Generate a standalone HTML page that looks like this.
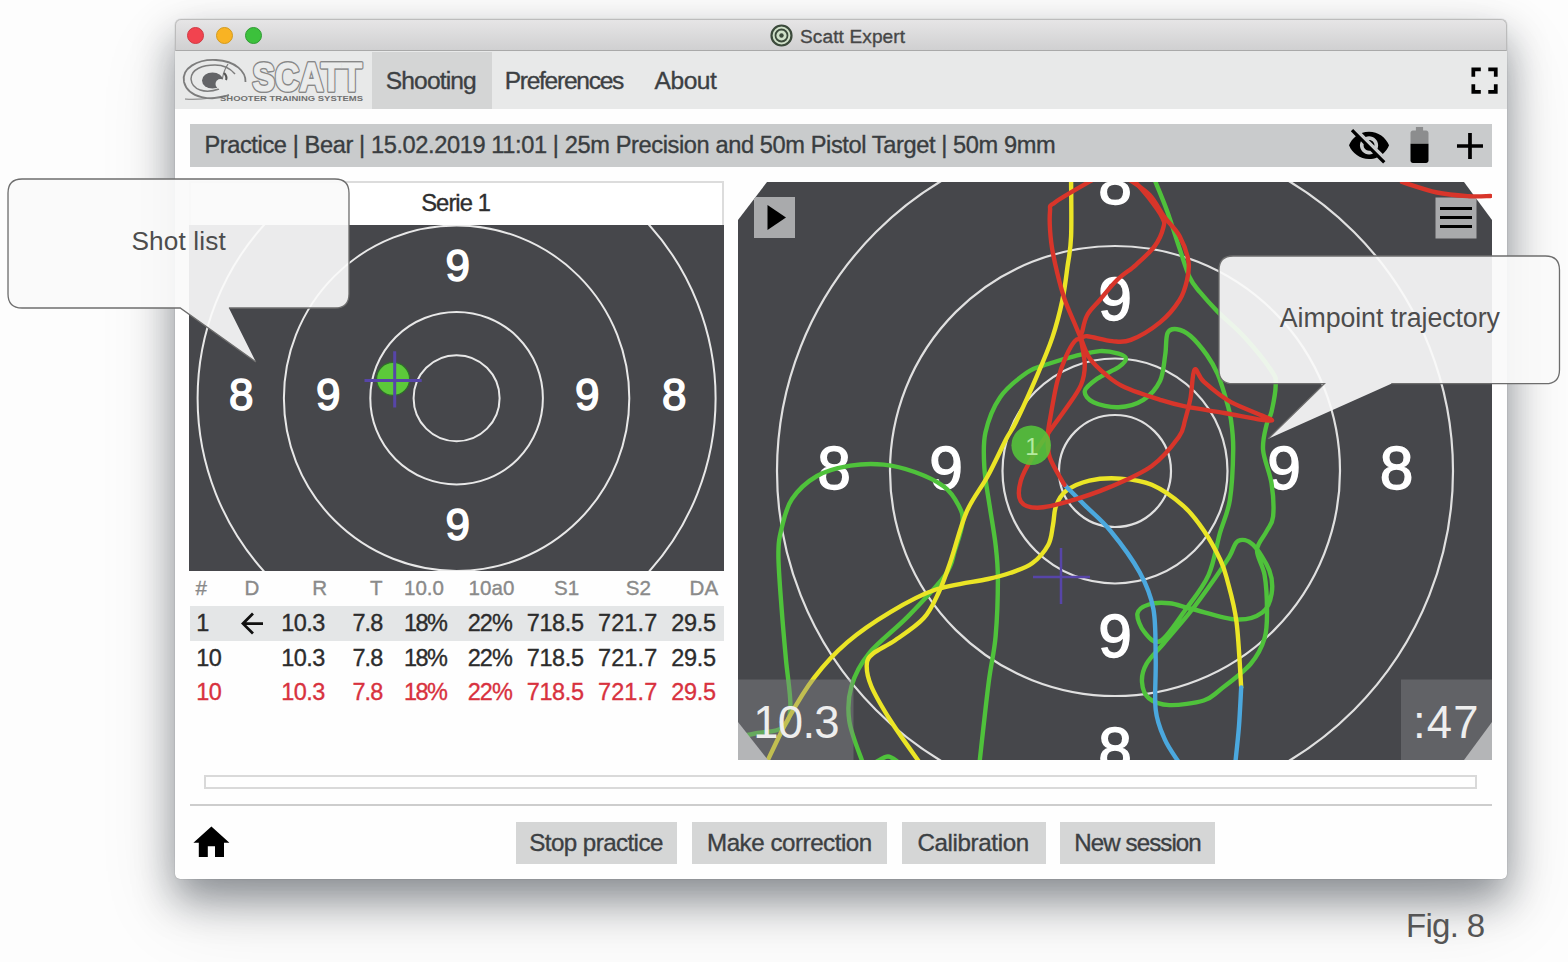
<!DOCTYPE html>
<html><head><meta charset="utf-8">
<style>
*{margin:0;padding:0;box-sizing:border-box}
html,body{width:1568px;height:962px;overflow:hidden;background:#fdfdfd;font-family:"Liberation Sans",sans-serif}
div,svg{position:absolute}
.t{white-space:nowrap;line-height:1;-webkit-text-stroke:0.35px currentColor}
.r{-webkit-text-stroke:0}
</style></head><body>
<div style="left:175px;top:18.5px;width:1332px;height:860.5px;background:#fefefe;border-radius:6px 6px 5px 5px;box-shadow:0 20px 40px rgba(10,20,30,0.42),0 30px 80px rgba(0,0,0,0.12),0 0 1px rgba(0,0,0,0.45)"></div>
<div style="left:175px;top:18.5px;width:1332px;height:32.5px;border-radius:6px 6px 0 0;background:linear-gradient(#e6e5e6,#d0d0d1);border:1px solid #bcbcbc;border-bottom:1px solid #a9a9a9"></div>
<div style="left:186.8px;top:26.8px;width:17.4px;height:17.4px;border-radius:50%;background:#f2434f;border:1px solid #cf3a44"></div>
<div style="left:215.8px;top:26.8px;width:17.4px;height:17.4px;border-radius:50%;background:#f9b323;border:1px solid #d29a1e"></div>
<div style="left:244.5px;top:26.8px;width:17.4px;height:17.4px;border-radius:50%;background:#3cc13c;border:1px solid #2f9a33"></div>
<svg style="left:770px;top:24px" width="23" height="23" viewBox="0 0 23 23"><circle cx="11.5" cy="11.5" r="10" fill="#cfe0c8" stroke="#3b4a3b" stroke-width="2.2"/><circle cx="11.5" cy="11.5" r="6" fill="none" stroke="#3b4a3b" stroke-width="1.8"/><circle cx="11.5" cy="11.5" r="2.2" fill="#3b4a3b"/></svg>
<div class="t" style="left:800px;top:26.8px;font-size:19.09px;letter-spacing:0.108px;color:#474747;">Scatt Expert</div>
<div style="left:175px;top:51px;width:1332px;height:58px;background:#e8e9e9"></div>
<div style="left:371.5px;top:52px;width:120px;height:57px;background:#d4d5d5"></div>
<div class="t" style="left:385.8px;top:68.7px;font-size:24.58px;letter-spacing:-0.872px;color:#3c4043;">Shooting</div>
<div class="t" style="left:504.7px;top:68.7px;font-size:24.58px;letter-spacing:-1.285px;color:#3c4043;">Preferences</div>
<div class="t" style="left:654.6px;top:68.7px;font-size:24.58px;letter-spacing:-0.491px;color:#3c4043;">About</div>
<svg style="left:180px;top:55px" width="190" height="50" viewBox="180 55 190 50"><g fill="none" stroke="#7d7d7d" stroke-width="1.8"><path d="M229 95C212 102 188 98 184 82C181 68 198 59 216 60C236 61 246 72 245.5 82"/><path d="M219 89C205 94 192 90 191 79C191 69 203 65 215 65C224 65 230 68 235 74" stroke-width="1.5"/><path d="M228 64C224 70 222 76 222 84" stroke-width="1.3"/><path d="M185 99C200 100 215 98 229 95" stroke-width="1.2"/></g><ellipse cx="212.5" cy="80.5" rx="10.5" ry="8" fill="#636467"/><circle cx="220.5" cy="84" r="5" fill="#e8e9e9"/><path d="M224 73C226 75 227 78 226 80" stroke="#555" stroke-width="2.2" fill="none"/><g font-family="Liberation Sans" font-weight="bold" font-size="41"><text x="252.5" y="90.5" textLength="109.5" lengthAdjust="spacingAndGlyphs" fill="#888" stroke="#888" stroke-width="4.2" stroke-linejoin="round">SCATT</text><text x="252.5" y="90.5" textLength="109.5" lengthAdjust="spacingAndGlyphs" fill="#ebecec" stroke="#ebecec" stroke-width="1.2">SCATT</text></g><text x="220" y="101" font-family="Liberation Sans" font-weight="bold" font-size="7.6" textLength="143" lengthAdjust="spacingAndGlyphs" fill="#707070">SHOOTER TRAINING SYSTEMS</text></svg>
<svg style="left:0;top:0" width="1568" height="962" viewBox="0 0 1568 962" pointer-events="none"><path transform="translate(1462.1 58.15) scale(1.87)" d="M7 14H5v5h5v-2H7v-3zm-2-4h2V7h3V5H5v5zm12 7h-3v2h5v-5h-2v3zM14 5v2h3v3h2V5h-5z" fill="#000"/></svg>
<div style="left:190px;top:124px;width:1302px;height:43px;background:#c9cbcc"></div>
<div class="t" style="left:204.4px;top:133.8px;font-size:23.61px;letter-spacing:-0.394px;color:#393d40;">Practice | Bear | 15.02.2019 11:01 | 25m Precision and 50m Pistol Target | 50m 9mm</div>
<svg style="left:0;top:0" width="1568" height="962" viewBox="0 0 1568 962"><path transform="translate(1347.2 123.5) scale(1.82)" d="M12 7c2.76 0 5 2.24 5 5 0 .65-.13 1.26-.36 1.83l2.92 2.92c1.510-1.26 2.7-2.89 3.43-4.75-1.73-4.39-6-7.5-11-7.5-1.4 0-2.74.25-3.98.7l2.16 2.16C10.74 7.130 11.35 7 12 7zM2 4.27l2.28 2.28.46.46C3.08 8.3 1.780 10.02 1 12c1.73 4.39 6 7.5 11 7.5 1.55 0 3.03-.3 4.38-.84l.42.42L19.73 22 21 20.73 3.27 3 2 4.27zM7.53 9.8l1.550 1.55c-.05.21-.08.43-.08.65 0 1.66 1.34 3 3 3 .22 0 .44-.03.65-.08l1.55 1.55c-.67.33-1.41.53-2.2.53-2.76 0-5-2.24-5-5 0-.79.2-1.53.53-2.2zm4.31-.78l3.15 3.15.02-.16c0-1.66-1.34-3-3-3l-.17.01z" fill="#000"/><g transform="translate(1397.9 123.4) scale(1.8)"><path d="M15.67 4H14V2h-4v2H8.33C7.6 4 7 4.6 7 5.33V11.3h10V5.33C17 4.6 16.4 4 15.67 4z" fill="#000" fill-opacity="0.3"/><path d="M7 11.3v9.37C7 21.4 7.6 22 8.33 22h7.33c.74 0 1.34-.6 1.34-1.33V11.3H7z" fill="#000"/></g><path transform="translate(1447.7 123.7) scale(1.857)" d="M19 13h-6v6h-2v-6H5v-2h6V5h2v6h6v2z" fill="#000"/></svg>
<div style="left:189px;top:181px;width:535px;height:44px;background:#fff;border:2px solid #dcdcdc;border-bottom:none"></div>
<div class="t" style="left:421.2px;top:191.3px;font-size:23.75px;letter-spacing:-0.924px;color:#2e2e2e;">Serie 1</div>
<svg style="left:189px;top:225px" width="535" height="346" viewBox="189 225 535 346"><rect x="189" y="225" width="535" height="346" fill="#46474b"/><circle cx="456.6" cy="398.2" r="43" fill="none" stroke="#e8e8e8" stroke-width="2"/><circle cx="456.6" cy="398.2" r="86.3" fill="none" stroke="#e8e8e8" stroke-width="2"/><circle cx="456.6" cy="398.2" r="172.7" fill="none" stroke="#e8e8e8" stroke-width="2"/><circle cx="456.6" cy="398.2" r="259" fill="none" stroke="#e8e8e8" stroke-width="2"/><text x="241.29999999999998" y="409.5" font-size="44" text-anchor="middle" fill="#fff" stroke="#fff" stroke-width="1.5" font-family="Liberation Sans">8</text><text x="328.2" y="409.8" font-size="44" text-anchor="middle" fill="#fff" stroke="#fff" stroke-width="1.5" font-family="Liberation Sans">9</text><text x="587.3000000000001" y="409.8" font-size="44" text-anchor="middle" fill="#fff" stroke="#fff" stroke-width="1.5" font-family="Liberation Sans">9</text><text x="674.2" y="409.5" font-size="44" text-anchor="middle" fill="#fff" stroke="#fff" stroke-width="1.5" font-family="Liberation Sans">8</text><text x="457.8" y="280.9" font-size="44" text-anchor="middle" fill="#fff" stroke="#fff" stroke-width="1.5" font-family="Liberation Sans">9</text><text x="457.8" y="539.8" font-size="44" text-anchor="middle" fill="#fff" stroke="#fff" stroke-width="1.5" font-family="Liberation Sans">9</text><circle cx="393.1" cy="378.9" r="16.5" fill="#5cc93a" stroke="#2f6f2a" stroke-width="1.2"/><path d="M394.7 351.3V407.4M364.5 380.6H421.7" stroke="#5745a8" stroke-width="3"/></svg>
<div style="left:189.5px;top:606px;width:534px;height:34.5px;background:#e4e6e7"></div>
<div class="t" style="left:195.4px;top:578.4px;font-size:20.57px;letter-spacing:0px;color:#8a8a8a;">#</div>
<div class="t" style="left:244.5px;top:578.4px;font-size:20.57px;letter-spacing:0px;color:#8a8a8a;">D</div>
<div class="t" style="left:312.2px;top:578.4px;font-size:20.57px;letter-spacing:0px;color:#8a8a8a;">R</div>
<div class="t" style="left:370px;top:578.4px;font-size:20.57px;letter-spacing:0px;color:#8a8a8a;">T</div>
<div class="t" style="left:404px;top:578.4px;font-size:20.57px;letter-spacing:0px;color:#8a8a8a;">10.0</div>
<div class="t" style="left:468.6px;top:578.4px;font-size:20.57px;letter-spacing:0px;color:#8a8a8a;">10a0</div>
<div class="t" style="left:554px;top:578.4px;font-size:20.57px;letter-spacing:0px;color:#8a8a8a;">S1</div>
<div class="t" style="left:625.7px;top:578.4px;font-size:20.57px;letter-spacing:0px;color:#8a8a8a;">S2</div>
<div class="t" style="left:689.6px;top:578.4px;font-size:20.57px;letter-spacing:0px;color:#8a8a8a;">DA</div>
<div class="t" style="left:196.3px;top:611.8px;font-size:23.47px;letter-spacing:-0.5px;color:#2c2c2c;">1</div>
<div class="t" style="left:281.3px;top:611.8px;font-size:23.47px;letter-spacing:-0.542px;color:#2c2c2c;">10.3</div>
<div class="t" style="left:352.4px;top:611.8px;font-size:23.47px;letter-spacing:-0.886px;color:#2c2c2c;">7.8</div>
<div class="t" style="left:404px;top:611.8px;font-size:23.47px;letter-spacing:-1.552px;color:#2c2c2c;">18%</div>
<div class="t" style="left:467.8px;top:611.8px;font-size:23.47px;letter-spacing:-1.002px;color:#2c2c2c;">22%</div>
<div class="t" style="left:526.7px;top:611.8px;font-size:23.47px;letter-spacing:-0.344px;color:#2c2c2c;">718.5</div>
<div class="t" style="left:598px;top:611.8px;font-size:23.47px;letter-spacing:0.131px;color:#2c2c2c;">721.7</div>
<div class="t" style="left:671.3px;top:611.8px;font-size:23.47px;letter-spacing:-0.308px;color:#2c2c2c;">29.5</div>
<div class="t" style="left:196.3px;top:646.5999999999999px;font-size:23.47px;letter-spacing:-0.5px;color:#2c2c2c;">10</div>
<div class="t" style="left:281.3px;top:646.5999999999999px;font-size:23.47px;letter-spacing:-0.542px;color:#2c2c2c;">10.3</div>
<div class="t" style="left:352.4px;top:646.5999999999999px;font-size:23.47px;letter-spacing:-0.886px;color:#2c2c2c;">7.8</div>
<div class="t" style="left:404px;top:646.5999999999999px;font-size:23.47px;letter-spacing:-1.552px;color:#2c2c2c;">18%</div>
<div class="t" style="left:467.8px;top:646.5999999999999px;font-size:23.47px;letter-spacing:-1.002px;color:#2c2c2c;">22%</div>
<div class="t" style="left:526.7px;top:646.5999999999999px;font-size:23.47px;letter-spacing:-0.344px;color:#2c2c2c;">718.5</div>
<div class="t" style="left:598px;top:646.5999999999999px;font-size:23.47px;letter-spacing:0.131px;color:#2c2c2c;">721.7</div>
<div class="t" style="left:671.3px;top:646.5999999999999px;font-size:23.47px;letter-spacing:-0.308px;color:#2c2c2c;">29.5</div>
<div class="t" style="left:196.3px;top:681.0999999999999px;font-size:23.47px;letter-spacing:-0.5px;color:#d8323e;">10</div>
<div class="t" style="left:281.3px;top:681.0999999999999px;font-size:23.47px;letter-spacing:-0.542px;color:#d8323e;">10.3</div>
<div class="t" style="left:352.4px;top:681.0999999999999px;font-size:23.47px;letter-spacing:-0.886px;color:#d8323e;">7.8</div>
<div class="t" style="left:404px;top:681.0999999999999px;font-size:23.47px;letter-spacing:-1.552px;color:#d8323e;">18%</div>
<div class="t" style="left:467.8px;top:681.0999999999999px;font-size:23.47px;letter-spacing:-1.002px;color:#d8323e;">22%</div>
<div class="t" style="left:526.7px;top:681.0999999999999px;font-size:23.47px;letter-spacing:-0.344px;color:#d8323e;">718.5</div>
<div class="t" style="left:598px;top:681.0999999999999px;font-size:23.47px;letter-spacing:0.131px;color:#d8323e;">721.7</div>
<div class="t" style="left:671.3px;top:681.0999999999999px;font-size:23.47px;letter-spacing:-0.308px;color:#d8323e;">29.5</div>
<svg style="left:0;top:0" width="1568" height="962" viewBox="0 0 1568 962"><path transform="translate(235.5 607) scale(1.375)" d="M20 11H7.83l5.59-5.59L12 4l-8 8 8 8 1.41-1.41L7.83 13H20v-2z" fill="#111"/></svg>
<svg style="left:738px;top:182px" width="754" height="578" viewBox="738 182 754 578"><defs><clipPath id="rc"><polygon points="767,182 1464,182 1492,220 1492,760 738,760 738,220"/></clipPath></defs><g clip-path="url(#rc)"><rect x="738" y="182" width="754" height="578" fill="#46474b"/><circle cx="1115" cy="471" r="56" fill="none" stroke="#e0e0e0" stroke-width="2.2"/><circle cx="1115" cy="471" r="112.5" fill="none" stroke="#e0e0e0" stroke-width="2.2"/><circle cx="1115" cy="471" r="225" fill="none" stroke="#e0e0e0" stroke-width="2.2"/><circle cx="1115" cy="471" r="338" fill="none" stroke="#e0e0e0" stroke-width="2.2"/><text x="834.0" y="488.5" font-size="60.5" text-anchor="middle" fill="#fff" stroke="#fff" stroke-width="1.33" font-family="Liberation Sans">8</text><text x="946.2" y="488.5" font-size="60.5" text-anchor="middle" fill="#fff" stroke="#fff" stroke-width="1.33" font-family="Liberation Sans">9</text><text x="1284.0" y="488.5" font-size="60.5" text-anchor="middle" fill="#fff" stroke="#fff" stroke-width="1.33" font-family="Liberation Sans">9</text><text x="1396.5" y="488.5" font-size="60.5" text-anchor="middle" fill="#fff" stroke="#fff" stroke-width="1.33" font-family="Liberation Sans">8</text><text x="1115.1" y="204.0" font-size="60.5" text-anchor="middle" fill="#fff" stroke="#fff" stroke-width="1.33" font-family="Liberation Sans">8</text><text x="1115.1" y="319.7" font-size="60.5" text-anchor="middle" fill="#fff" stroke="#fff" stroke-width="1.33" font-family="Liberation Sans">9</text><text x="1115.1" y="657.3" font-size="60.5" text-anchor="middle" fill="#fff" stroke="#fff" stroke-width="1.33" font-family="Liberation Sans">9</text><text x="1115.1" y="770.0" font-size="60.5" text-anchor="middle" fill="#fff" stroke="#fff" stroke-width="1.33" font-family="Liberation Sans">8</text><g><path d="M736.0 737.0C739.6 736.3 750.1 734.5 757.7 733.0C765.3 731.5 776.2 732.2 781.7 728.0C787.2 723.8 789.7 719.3 790.4 708.0C791.1 696.7 787.5 676.4 786.0 660.0C784.5 643.6 783.0 627.1 781.7 609.6C780.4 592.1 778.4 568.6 778.4 555.0C778.4 541.4 779.4 537.3 781.7 528.0C784.0 518.7 786.1 507.7 792.0 499.0C797.9 490.3 807.3 481.6 817.0 476.0C826.7 470.4 839.2 467.6 850.3 465.7C861.4 463.8 872.9 463.6 883.6 464.6C894.4 465.7 904.8 468.4 914.8 472.0C924.8 475.6 936.6 481.0 943.9 486.5C951.2 492.0 955.4 499.3 958.5 505.2C961.6 511.1 963.2 514.5 962.6 522.0C962.0 529.5 957.9 541.2 955.0 550.0C952.1 558.8 953.2 563.7 945.4 574.7C937.6 585.7 921.0 603.0 908.3 616.1C895.6 629.2 878.5 641.6 869.0 653.3C859.5 664.9 854.8 674.7 851.5 686.0C848.2 697.3 847.5 708.3 849.3 721.0C851.1 733.7 860.3 755.2 862.5 762.0" fill="none" stroke="#4fc23b" stroke-width="4.4" stroke-linejoin="round" stroke-linecap="round"/><path d="M876.0 762.0C878.0 761.1 884.3 756.5 888.0 756.5C891.7 756.5 896.3 761.1 898.0 762.0" fill="none" stroke="#4fc23b" stroke-width="4.4" stroke-linejoin="round" stroke-linecap="round"/><path d="M979.6 762.0C981.1 748.7 986.0 703.1 988.7 682.2C991.4 661.3 994.1 653.6 995.6 636.5C997.1 619.4 997.9 594.5 997.9 579.3C997.9 564.0 997.0 557.3 995.6 545.0C994.2 532.7 991.5 518.4 989.6 505.6C987.7 492.8 985.1 480.3 984.4 468.2C983.7 456.1 982.8 444.6 985.4 432.8C988.0 421.0 993.1 407.4 1000.0 397.4C1006.9 387.3 1019.0 378.1 1027.0 372.5C1035.0 366.9 1040.0 366.7 1048.0 364.0C1056.0 361.3 1066.2 358.2 1074.8 356.1C1083.4 354.0 1092.5 351.5 1099.8 351.1C1107.1 350.7 1114.1 352.4 1118.5 353.6C1122.9 354.9 1126.0 356.3 1126.0 358.6C1126.0 360.9 1123.3 364.0 1118.5 367.3C1113.7 370.6 1102.9 374.7 1097.3 378.6C1091.7 382.6 1085.4 387.1 1084.8 391.0C1084.2 394.9 1087.9 399.5 1093.5 402.2C1099.1 404.9 1110.2 407.6 1118.5 407.2C1126.8 406.8 1136.5 404.2 1143.4 399.8C1150.3 395.4 1156.4 388.5 1160.0 381.0C1163.6 373.5 1163.9 363.0 1165.2 355.0C1166.5 347.0 1165.6 337.3 1167.6 333.0C1169.6 328.7 1173.2 328.7 1177.0 329.2C1180.8 329.7 1185.5 331.7 1190.5 336.0C1195.5 340.3 1202.3 348.6 1206.8 354.9C1211.3 361.2 1214.4 366.6 1217.6 373.8C1220.8 381.0 1223.5 390.4 1225.7 398.1C1227.9 405.8 1229.8 411.4 1231.0 420.0C1232.2 428.6 1233.4 436.7 1233.2 450.0C1233.0 463.3 1232.1 485.9 1229.9 499.8C1227.7 513.6 1223.5 520.6 1219.9 533.1C1216.3 545.6 1214.3 562.2 1208.5 575.1C1202.7 588.0 1193.1 599.2 1185.1 610.2C1177.1 621.2 1167.1 637.4 1160.3 641.0C1153.5 644.6 1148.1 636.5 1144.3 631.9C1140.5 627.3 1136.7 618.2 1137.4 613.6C1138.2 609.0 1143.5 606.2 1148.8 604.5C1154.1 602.8 1162.2 602.5 1169.4 603.3C1176.7 604.0 1181.1 606.3 1192.3 609.0C1203.5 611.7 1224.8 618.9 1236.5 619.5C1248.2 620.1 1256.5 616.8 1262.3 612.5C1268.1 608.2 1270.4 600.8 1271.6 593.8C1272.8 586.8 1272.4 578.6 1269.3 570.4C1266.2 562.2 1258.1 549.6 1252.9 544.7C1247.7 539.8 1241.9 539.0 1238.0 541.0C1234.1 543.0 1233.2 550.3 1229.5 556.4C1225.8 562.5 1222.1 568.0 1215.5 577.4C1208.9 586.8 1198.4 601.6 1189.8 612.5C1181.2 623.4 1171.2 634.4 1164.0 643.0C1156.8 651.6 1150.2 657.4 1146.5 663.9C1142.8 670.4 1141.6 676.5 1142.0 682.2C1142.4 687.9 1144.2 694.4 1148.8 698.2C1153.4 702.0 1160.2 704.7 1169.4 705.1C1178.6 705.5 1195.2 703.1 1203.7 700.5C1212.2 697.9 1212.4 695.8 1220.2 689.7C1228.0 683.6 1243.2 672.6 1250.6 664.0C1258.0 655.4 1261.9 647.2 1264.6 638.2C1267.3 629.2 1267.0 620.7 1267.0 610.2C1267.0 599.7 1266.3 585.1 1264.6 575.1C1262.9 565.1 1256.7 557.3 1257.0 550.0C1257.3 542.7 1263.8 537.0 1266.5 531.4C1269.2 525.8 1272.3 524.5 1273.1 516.5C1273.9 508.5 1273.2 494.3 1271.5 483.2C1269.8 472.1 1263.9 459.7 1263.1 450.0C1262.3 440.3 1265.1 431.4 1266.5 425.0C1267.9 418.6 1270.1 418.3 1271.6 411.6C1273.1 404.9 1275.7 391.4 1275.7 384.6C1275.7 377.8 1276.8 378.9 1271.6 371.0C1266.4 363.1 1253.6 347.2 1244.6 337.3C1235.6 327.4 1225.0 319.1 1217.6 311.6C1210.2 304.1 1204.7 297.9 1200.0 292.2C1195.3 286.5 1193.0 284.6 1189.6 277.3C1186.2 270.0 1183.3 259.6 1179.6 248.6C1175.9 237.6 1171.3 222.6 1167.2 211.2C1163.1 199.8 1156.8 185.2 1154.7 180.0" fill="none" stroke="#4fc23b" stroke-width="4.4" stroke-linejoin="round" stroke-linecap="round"/><path d="M1071.1 180.0C1071.1 189.3 1071.7 221.5 1071.1 236.1C1070.5 250.7 1068.9 256.7 1067.4 267.3C1066.0 277.9 1064.9 288.3 1062.4 300.0C1059.9 311.7 1056.6 324.9 1052.4 337.4C1048.2 349.9 1043.5 360.7 1037.4 374.8C1031.3 388.9 1021.2 411.3 1016.0 422.0C1010.8 432.7 1011.0 429.9 1006.2 439.0C1001.5 448.1 994.1 464.4 987.5 476.5C980.9 488.6 972.9 497.5 966.8 511.4C960.7 525.3 955.6 546.6 951.0 560.0C946.4 573.4 943.5 582.3 938.9 592.0C934.3 601.7 930.9 610.3 923.6 618.3C916.3 626.3 903.6 634.4 895.2 640.2C886.8 646.0 878.1 649.3 873.4 653.3C868.7 657.3 867.2 658.8 866.8 664.2C866.4 669.7 867.2 676.5 871.2 686.0C875.2 695.5 882.8 708.3 890.8 721.0C898.8 733.7 914.5 755.2 919.2 762.0" fill="none" stroke="#ebe526" stroke-width="4.4" stroke-linejoin="round" stroke-linecap="round"/><path d="M766.0 764.0C769.7 756.5 780.1 733.2 788.2 718.8C796.3 704.3 804.6 690.0 814.4 677.3C824.2 664.5 834.5 653.2 847.2 642.3C859.9 631.4 876.2 620.5 890.8 611.8C905.3 603.1 918.3 595.5 934.5 590.0C950.7 584.5 975.4 581.8 988.0 579.0C1000.6 576.2 1002.6 575.6 1010.0 573.0C1017.4 570.4 1025.8 568.0 1032.2 563.3C1038.6 558.6 1044.7 551.4 1048.2 545.0C1051.7 538.6 1051.7 531.5 1053.0 525.0C1054.3 518.5 1053.8 511.7 1056.0 506.0C1058.2 500.3 1060.4 495.2 1066.0 491.0C1071.6 486.8 1080.3 482.7 1089.4 480.6C1098.5 478.5 1110.2 477.9 1120.6 478.6C1131.0 479.3 1141.4 480.3 1151.8 484.8C1162.2 489.3 1174.3 498.0 1183.0 505.6C1191.7 513.2 1197.6 521.4 1203.8 530.5C1210.0 539.6 1216.5 551.8 1220.4 560.0C1224.3 568.2 1224.5 569.7 1227.2 580.0C1229.9 590.3 1234.2 604.0 1236.5 621.9C1238.8 639.8 1240.4 676.5 1241.2 687.4" fill="none" stroke="#ebe526" stroke-width="4.4" stroke-linejoin="round" stroke-linecap="round"/><path d="M1064.4 484.8C1067.9 488.3 1077.6 498.0 1085.2 505.6C1092.8 513.2 1101.1 519.4 1110.2 530.5C1119.3 541.6 1132.5 559.3 1139.7 572.4C1146.9 585.5 1150.7 594.5 1153.4 609.0C1156.1 623.5 1155.3 642.6 1155.7 659.4C1156.1 676.2 1154.2 696.4 1155.7 709.7C1157.2 723.0 1161.0 730.7 1164.8 739.4C1168.6 748.1 1176.3 758.2 1178.6 762.0" fill="none" stroke="#4ba8de" stroke-width="4.4" stroke-linejoin="round" stroke-linecap="round"/><path d="M1241.2 687.4C1240.8 694.0 1239.9 714.7 1238.9 727.1C1237.9 739.5 1236.0 756.2 1235.4 762.0" fill="none" stroke="#4ba8de" stroke-width="4.4" stroke-linejoin="round" stroke-linecap="round"/><path d="M1092.3 180.0C1086.1 183.7 1062.0 197.2 1054.9 202.4C1047.9 207.6 1050.6 204.5 1050.0 211.2C1049.4 217.8 1050.0 231.9 1051.2 242.3C1052.4 252.7 1055.1 263.9 1057.4 273.5C1059.7 283.1 1062.1 291.9 1064.9 300.0C1067.7 308.1 1071.3 315.6 1074.0 322.0C1076.7 328.4 1078.4 332.6 1081.0 338.7C1083.6 344.8 1085.6 352.6 1089.8 358.6C1094.0 364.6 1100.2 370.0 1106.0 374.8C1111.8 379.6 1115.7 383.1 1124.7 387.3C1133.7 391.5 1150.2 396.7 1160.0 399.8C1169.8 402.9 1173.1 404.0 1183.8 406.2C1194.5 408.4 1209.6 410.6 1224.3 413.0C1239.0 415.4 1270.9 422.3 1272.0 420.5C1273.1 418.7 1242.3 408.6 1231.0 402.2C1219.7 395.8 1210.1 387.3 1204.0 381.9C1197.9 376.5 1196.8 367.0 1194.6 369.7C1192.3 372.4 1192.1 389.7 1190.5 398.1C1188.9 406.5 1187.0 413.5 1185.1 420.0C1183.1 426.5 1184.3 429.3 1178.8 437.0C1173.2 444.7 1163.2 457.7 1151.8 466.0C1140.4 474.3 1124.1 481.0 1110.2 486.9C1096.3 492.8 1080.7 497.9 1068.6 501.4C1056.5 504.9 1045.4 507.7 1037.4 507.7C1029.4 507.7 1023.6 505.9 1020.8 501.4C1018.0 496.9 1018.7 488.2 1020.8 480.6C1022.9 473.0 1028.3 464.0 1033.2 455.7C1038.1 447.4 1044.4 438.7 1049.9 430.7C1055.5 422.7 1061.3 415.4 1066.5 407.8C1071.7 400.2 1078.0 392.2 1081.0 385.0C1084.0 377.8 1084.8 372.5 1084.8 364.8C1084.8 357.1 1081.4 344.3 1081.0 338.7C1080.6 333.1 1081.2 335.1 1082.3 331.2C1083.3 327.2 1084.4 320.2 1087.3 315.0C1090.2 309.8 1094.8 305.9 1099.8 300.0C1104.8 294.1 1111.3 285.7 1117.3 279.8C1123.3 273.9 1129.8 270.4 1136.0 264.8C1142.2 259.2 1150.1 252.3 1154.7 246.1C1159.3 239.9 1162.2 232.2 1163.4 227.4C1164.7 222.6 1164.7 222.4 1162.2 217.4C1159.7 212.4 1153.3 203.7 1148.5 197.5C1143.7 191.3 1136.0 182.9 1133.5 180.0" fill="none" stroke="#d8352a" stroke-width="4.4" stroke-linejoin="round" stroke-linecap="round"/><path d="M1129.8 180.0C1133.1 182.5 1143.9 188.8 1149.7 195.0C1155.5 201.2 1159.7 210.6 1164.7 217.4C1169.7 224.2 1175.6 228.8 1179.6 236.1C1183.5 243.4 1187.2 253.7 1188.4 261.0C1189.7 268.3 1188.6 273.3 1187.1 279.8C1185.6 286.3 1184.1 292.9 1179.6 300.0C1175.1 307.1 1168.1 315.8 1160.0 322.4C1151.9 329.0 1138.9 336.8 1130.9 339.9C1122.9 343.0 1119.5 341.7 1112.2 341.1C1104.9 340.5 1092.5 336.6 1087.3 336.2C1082.1 335.8 1083.1 337.9 1081.0 338.7C1078.9 339.5 1077.3 338.2 1074.8 341.1C1072.3 344.0 1069.0 349.5 1066.1 356.1C1063.2 362.8 1060.1 370.4 1057.4 381.0C1054.7 391.6 1051.5 410.8 1049.9 420.0C1048.3 429.2 1047.8 429.7 1047.8 436.0C1047.8 442.3 1047.1 449.7 1049.9 457.8C1052.7 465.9 1062.0 480.3 1064.4 484.8" fill="none" stroke="#d8352a" stroke-width="4.4" stroke-linejoin="round" stroke-linecap="round"/></g><circle cx="1031.2" cy="445.3" r="19.8" fill="#55c53a" fill-opacity="0.88"/><text x="1032" y="455" font-size="24" text-anchor="middle" fill="#b5eaa0" font-family="Liberation Sans">1</text><path d="M1061 548V604M1033 577H1090" stroke="#5745a8" stroke-width="2.5"/><rect x="754" y="197" width="41" height="41" fill="#a9aaac"/><path d="M767.5 205L786 217.5L767.5 230z" fill="#000"/><rect x="1435.5" y="197.5" width="41" height="41" fill="#a9aaac"/><path d="M1440 208.5h32M1440 217.5h32M1440 226.5h32" stroke="#000" stroke-width="3.2"/></g><path d="M1402.0 182.0C1407.8 183.8 1425.8 190.1 1437.0 192.5C1448.2 194.9 1460.4 195.6 1469.3 196.2C1478.2 196.8 1487.0 196.0 1490.5 196.0" fill="none" stroke="#d8352a" stroke-width="4.4" stroke-linecap="round"/><rect x="738" y="679.5" width="115.5" height="80.5" fill="rgba(135,137,141,0.42)"/><rect x="1401" y="679.5" width="91" height="80.5" fill="rgba(135,137,141,0.42)"/></svg>
<svg style="left:738px;top:722px" width="30" height="38" viewBox="0 0 30 38"><path d="M0 0L30 38H0z" fill="#b4b5b7"/></svg>
<svg style="left:1464px;top:722px" width="28" height="38" viewBox="0 0 28 38"><path d="M28 0V38H0z" fill="#b4b5b7"/></svg>
<div class="t" style="left:753.2px;top:699.5px;font-size:45.5px;letter-spacing:-0.7px;color:#eeeeee;-webkit-text-stroke:0">10.3</div>
<div class="t" style="left:1413px;top:699.5px;font-size:45.5px;letter-spacing:1.2px;color:#eeeeee;-webkit-text-stroke:0">:47</div>
<div style="left:204px;top:775px;width:1273px;height:14px;border:2px solid #d9d9d9"></div>
<div style="left:190px;top:803.5px;width:1302px;height:2.5px;background:#cdcdcd"></div>
<svg style="left:0;top:0" width="1568" height="962" viewBox="0 0 1568 962"><path transform="translate(189.8 821.1) scale(1.8)" d="M10 20v-6h4v6h5v-8h3L12 3 2 12h3v8z" fill="#000"/></svg>
<div style="left:515.8px;top:821.6px;width:161.6px;height:42.2px;background:#d5d6d6"></div>
<div style="left:692px;top:821.6px;width:195px;height:42.2px;background:#d5d6d6"></div>
<div style="left:901.7px;top:821.6px;width:143.9px;height:42.2px;background:#d5d6d6"></div>
<div style="left:1060.4px;top:821.6px;width:154.4px;height:42.2px;background:#d5d6d6"></div>
<div class="t" style="left:529.3px;top:830.7px;font-size:24.16px;letter-spacing:-0.579px;color:#3c4043;">Stop practice</div>
<div class="t" style="left:707px;top:830.7px;font-size:24.16px;letter-spacing:-0.472px;color:#3c4043;">Make correction</div>
<div class="t" style="left:917.4px;top:830.7px;font-size:24.16px;letter-spacing:-0.364px;color:#3c4043;">Calibration</div>
<div class="t" style="left:1074.3px;top:830.7px;font-size:24.16px;letter-spacing:-0.951px;color:#3c4043;">New session</div>
<svg style="left:5.5px;top:176.5px" width="347.0" height="188.89999999999998" viewBox="5.5 176.5 347.0 188.89999999999998"><path d="M21.5 178.5H334.5Q348.5 178.5 348.5 192.5V293.5Q348.5 307.5 334.5 307.5H228.4L255.4 361.4L179.7 307.5H21.5Q7.5 307.5 7.5 293.5V192.5Q7.5 178.5 21.5 178.5z" fill="rgba(250,250,250,0.92)"/><path d="M228.4 307.5H334.5Q348.5 307.5 348.5 293.5V192.5Q348.5 178.5 334.5 178.5H21.5Q7.5 178.5 7.5 192.5V293.5Q7.5 307.5 21.5 307.5H179.7L255.4 361.4" fill="none" stroke="#6d6d6d" stroke-width="1.3"/></svg>
<div class="t" style="left:131.4px;top:227.8px;font-size:26.21px;letter-spacing:0.153px;color:#4d4d4d;-webkit-text-stroke:0">Shot list</div>
<svg style="left:1217px;top:253.5px" width="346.5" height="188.89999999999998" viewBox="1217 253.5 346.5 188.89999999999998"><path d="M1233 255.5H1545.5Q1559.5 255.5 1559.5 269.5V369.2Q1559.5 383.2 1545.5 383.2H1391.3L1268 438.4L1324.4 383.2H1233Q1219 383.2 1219 369.2V269.5Q1219 255.5 1233 255.5z" fill="rgba(250,250,250,0.92)"/><path d="M1391.3 383.2H1545.5Q1559.5 383.2 1559.5 369.2V269.5Q1559.5 255.5 1545.5 255.5H1233Q1219 255.5 1219 269.5V369.2Q1219 383.2 1233 383.2H1324.4L1268 438.4" fill="none" stroke="#6d6d6d" stroke-width="1.3"/></svg>
<div class="t" style="left:1279.8px;top:305.3px;font-size:26.78px;letter-spacing:-0.087px;color:#4d4d4d;-webkit-text-stroke:0">Aimpoint trajectory</div>
<div class="t" style="left:1405.9px;top:909.1px;font-size:33.05px;letter-spacing:-0.688px;color:#555;-webkit-text-stroke:0">Fig. 8</div>
</body></html>
